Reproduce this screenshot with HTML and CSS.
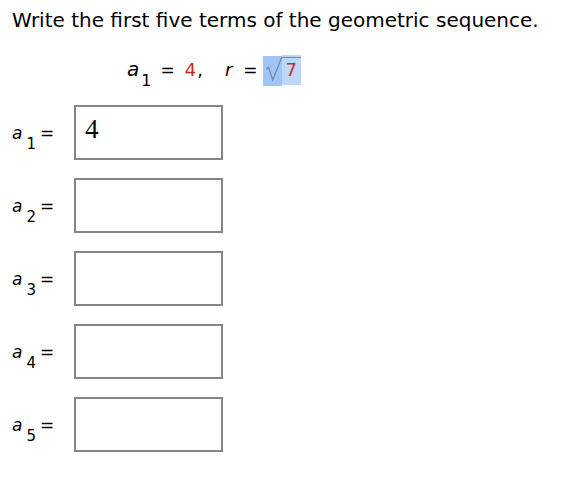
FILE: index.html
```html
<!DOCTYPE html>
<html>
<head>
<meta charset="utf-8">
<link rel="stylesheet" href="styles.css">
</head>
<body>
<div class="page">
  <p class="title">Write the first five terms of the geometric sequence.</p>
  <div class="given">
    <span class="ga">a</span><span class="gsub">1</span>
    <span class="geq">=</span>
    <span class="gfour red">4</span><span class="comma">,</span>
    <span class="gr">r</span>
    <span class="geq2">=</span>
    <span class="sqrt"><span class="rad"><svg width="19" height="30" viewBox="0 0 19 30"><path d="M3.5 13 L5.5 11.2 L9.7 24 L18.5 1.8 L19 1.8" fill="none" stroke="#7088a2" stroke-width="1.2"/></svg></span><span class="radicand red">7</span></span>
  </div>
  <div class="rows">
    <div class="row"><span class="label"><span class="var">a</span><span class="sub">1</span></span><span class="eq">=</span><div class="box">4</div></div>
    <div class="row"><span class="label"><span class="var">a</span><span class="sub">2</span></span><span class="eq">=</span><div class="box"></div></div>
    <div class="row"><span class="label"><span class="var">a</span><span class="sub">3</span></span><span class="eq">=</span><div class="box"></div></div>
    <div class="row"><span class="label"><span class="var">a</span><span class="sub">4</span></span><span class="eq">=</span><div class="box"></div></div>
    <div class="row"><span class="label"><span class="var">a</span><span class="sub">5</span></span><span class="eq">=</span><div class="box"></div></div>
  </div>
</div>
</body>
</html>
```
FILE: styles.css
```css
html, body { margin: 0; padding: 0; background: #fff; }
body { font-family: "DejaVu Sans", Verdana, sans-serif; color: #000; }
.page { width: 562px; height: 502px; }
.title { margin: 0; padding: 8px 0 0 12px; font-size: 20px; line-height: 24px; }

.given { display: flex; align-items: baseline; margin-top: 23px; padding-left: 127px; font-size: 17px; }
.ga { font-style: italic; font-size: 20px; }
.gsub { font-size: 16px; position: relative; top: 10px; margin-left: 2px; }
.geq { margin-left: 9px; }
.gfour { margin-left: 10px; font-size: 18px; }
.comma { margin-left: 1px; font-size: 18px; }
.gr { font-style: italic; margin-left: 22px; font-size: 18px; }
.geq2 { margin-left: 11px; }
.sqrt { display: inline-block; margin-left: 5px; line-height: 0; white-space: nowrap; }
.rad { display: inline-block; width: 19px; height: 30px; background: #a0c4f5; vertical-align: -10px; }
.rad svg { display: block; }
.radicand { display: inline-block; font-size: 18px; line-height: 17px; padding: 6px 4px 7px 4px; background: linear-gradient(#7088a2, #7088a2) 0 1.5px / 100% 1.4px no-repeat, #bcd7fb; vertical-align: baseline; }
.red { color: #cc2b20; }

.rows { display: flex; flex-direction: column; gap: 18px; margin-top: 19px; }
.row { display: flex; align-items: center; height: 55px; }
.label { box-sizing: border-box; width: 40px; padding-left: 12px; font-size: 17px; white-space: nowrap; }
.var { font-style: italic; }
.sub { font-size: 15px; position: relative; top: 10px; margin-left: 4px; }
.row .eq { width: 34px; font-size: 17px; }
.box { box-sizing: border-box; width: 149px; height: 55px; border: 2px solid #858585; font-family: "Liberation Serif", "Times New Roman", serif; font-size: 27px; padding-left: 9px; line-height: 44px; }
```
